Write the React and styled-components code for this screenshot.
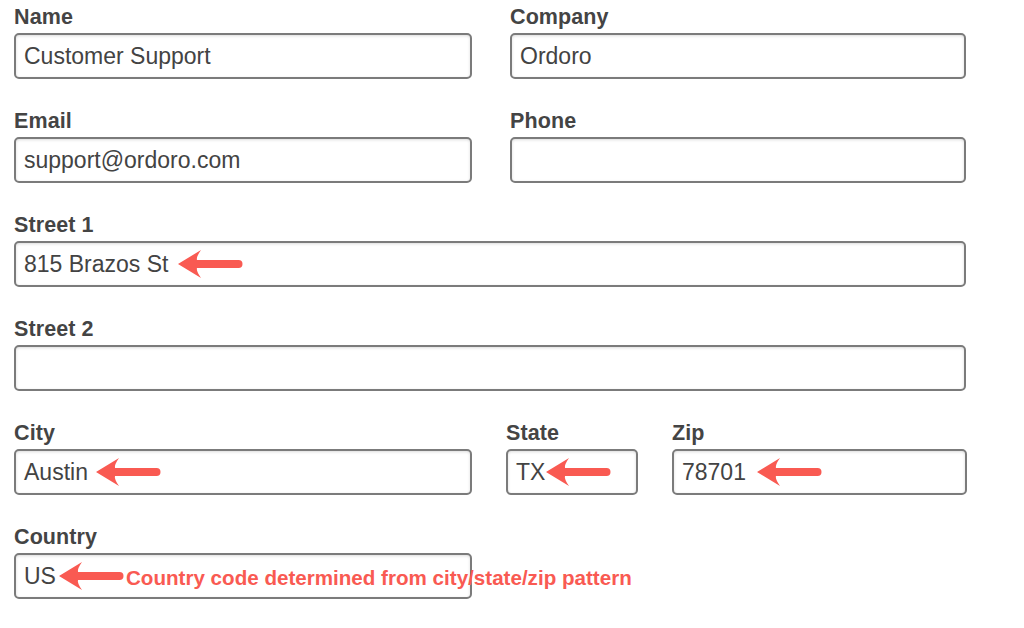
import React from "react";
import styled, { createGlobalStyle } from "styled-components";

const Global = createGlobalStyle`
  html, body { margin: 0; padding: 0; background: #ffffff; }
  body { font-family: "Liberation Sans", Arial, Helvetica, sans-serif; }
`;

const Form = styled.div`
  width: 953px;
  padding: 5px 0 0 14px;
  display: flex;
  flex-direction: column;
  row-gap: 30px;
`;

const Row = styled.div`
  display: grid;
  grid-template-columns: ${(p) => p.$cols};
  column-gap: ${(p) => p.$gap || 0}px;
`;

const Field = styled.div`
  display: flex;
  flex-direction: column;
  min-width: 0;
`;

const Label = styled.div`
  font-size: 21.5px;
  line-height: 24px;
  font-weight: 700;
  color: #444444;
  margin-bottom: 4px;
  letter-spacing: 0.1px;
`;

const Box = styled.div`
  box-sizing: border-box;
  height: 46px;
  border: 2px solid #7b7b7b;
  border-radius: 5px;
  box-shadow: inset 0 1px 3px rgba(0, 0, 0, 0.14);
  padding: 0 8px;
  display: flex;
  align-items: center;
  white-space: nowrap;
  overflow: visible;
  font-size: 23px;
  color: #434343;
`;

const Value = styled.span`
  line-height: 1;
`;

const ArrowSvg = styled.svg`
  flex: none;
  width: 66px;
  height: 30px;
  margin-left: ${(p) => p.$offset}px;
`;

const Note = styled.span`
  margin-left: 2px;
  font-size: 20.6px;
  font-weight: 700;
  color: #f95a52;
  line-height: 1;
  position: relative;
  top: 2px;
`;

function Arrow({ offset }) {
  return (
    <ArrowSvg $offset={offset} viewBox="0 0 66 30" aria-hidden="true">
      <path
        d="M1 15 L24 1 Q19 8 20 11 L61.5 11 A4 4 0 0 1 61.5 19 L20 19 Q19 22 24 29 Z"
        fill="#f95a52"
      />
    </ArrowSvg>
  );
}

function InputField({ label, value, arrow, note }) {
  return (
    <Field>
      <Label>{label}</Label>
      <Box>
        {value && <Value>{value}</Value>}
        {arrow !== undefined && <Arrow offset={arrow} />}
        {note && <Note>{note}</Note>}
      </Box>
    </Field>
  );
}

export default function App() {
  return (
    <>
      <Global />
      <Form>
        <Row $cols="458px 456px" $gap={38}>
          <InputField label="Name" value="Customer Support" />
          <InputField label="Company" value="Ordoro" />
        </Row>
        <Row $cols="458px 456px" $gap={38}>
          <InputField label="Email" value="support@ordoro.com" />
          <InputField label="Phone" />
        </Row>
        <Row $cols="952px">
          <InputField label="Street 1" value="815 Brazos St" arrow={9} />
        </Row>
        <Row $cols="952px">
          <InputField label="Street 2" />
        </Row>
        <Row $cols="458px 132px 295px" $gap={34}>
          <InputField label="City" value="Austin" arrow={7} />
          <InputField label="State" value="TX" arrow={0} />
          <InputField label="Zip" value="78701" arrow={10} />
        </Row>
        <Row $cols="458px">
          <InputField
            label="Country"
            value="US"
            arrow={2}
            note="Country code determined from city/state/zip pattern"
          />
        </Row>
      </Form>
    </>
  );
}
